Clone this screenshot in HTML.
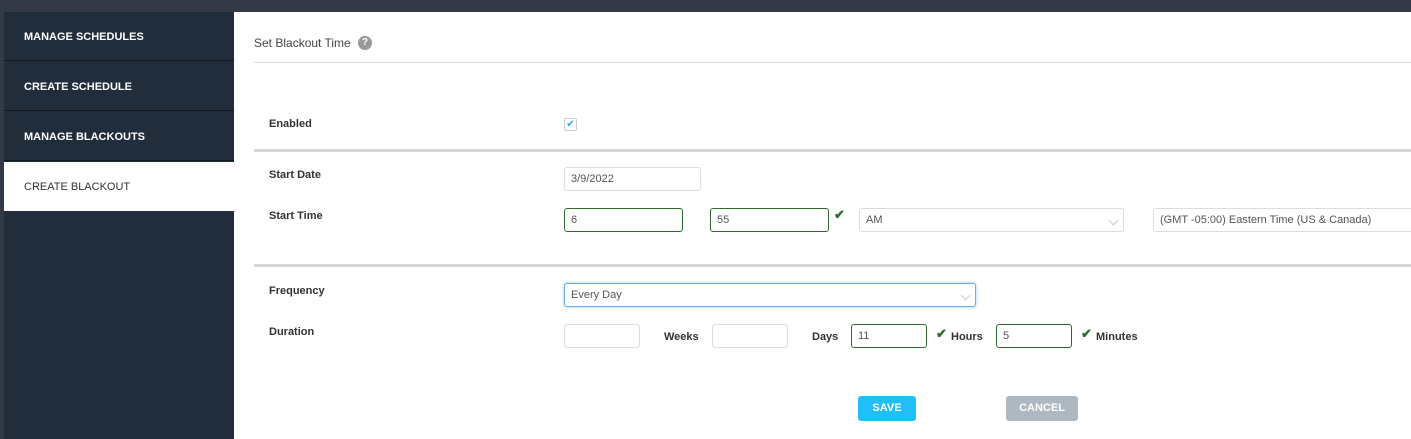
<!DOCTYPE html><html><head><style>
*{box-sizing:border-box;margin:0;padding:0}
body{width:1411px;height:439px;background:#fff;font-family:"Liberation Sans",Arial,sans-serif;position:relative;overflow:hidden}
.a{position:absolute}
.top{left:0;top:0;width:1411px;height:12px;background:#333a45}
.strip{left:0;top:12px;width:4px;height:427px;background:#333a45}
.side{left:4px;top:12px;width:230px;height:427px;background:#222d3b}
.item{position:absolute;left:4px;width:230px;height:49px;color:#fff;font-weight:bold;font-size:11px;padding-left:20px;line-height:50px;border-bottom:1px solid #111820}
.lbl{position:absolute;font-size:11px;font-weight:bold;color:#333}
.in{position:absolute;height:24px;border:1px solid #ddd;border-radius:3px;font-size:11px;color:#555;padding-left:6px;line-height:22px;background:#fff}
.g{border-color:#2f6b2f}
.chk{position:absolute;color:#2f6b2f;font-size:13px;font-weight:bold}
.hr{position:absolute;left:254px;right:0;height:3px;background:#d6d6d6}
.car{position:absolute;right:6px;top:8px;width:7px;height:7px;border-right:1.5px solid #ccc;border-bottom:1.5px solid #ccc;transform:rotate(45deg)}
.btn{position:absolute;top:396px;height:25px;border-radius:3px;color:#fff;font-size:11px;font-weight:bold;text-align:center;line-height:25px}
</style></head><body>
<div class="a top"></div><div class="a strip"></div><div class="a side"></div>
<div class="item" style="top:12px">MANAGE SCHEDULES</div>
<div class="item" style="top:62px">CREATE SCHEDULE</div>
<div class="item" style="top:112px">MANAGE BLACKOUTS</div>
<div class="item" style="top:162px;background:#fff;color:#333;font-weight:normal;border:none;height:49px">CREATE BLACKOUT</div>
<div class="a" style="left:254px;top:36px;font-size:12px;color:#444">Set Blackout Time</div>
<div class="a" style="left:358px;top:36px;width:14px;height:14px;border-radius:50%;background:#999;color:#fff;font-size:10px;font-weight:bold;text-align:center;line-height:14px">?</div>
<div class="a" style="left:254px;top:62px;right:0;height:1px;background:#ddd"></div>
<div class="lbl" style="left:269px;top:118px">Enabled</div>
<div class="a" style="left:564px;top:118px;width:13px;height:13px;border:1px solid #ccc;border-radius:2px;color:#2aa8e8;font-size:10px;text-align:center;line-height:12px">✔</div>
<div class="hr" style="top:149px"></div>
<div class="lbl" style="left:269px;top:169px">Start Date</div>
<div class="in" style="left:564px;top:167px;width:137px">3/9/2022</div>
<div class="lbl" style="left:269px;top:210px">Start Time</div>
<div class="in g" style="left:564px;top:208px;width:119px">6</div>
<div class="in g" style="left:710px;top:208px;width:119px">55</div>
<div class="chk" style="left:834px;top:207px">✔</div>
<div class="in" style="left:859px;top:208px;width:265px">AM<span class="car"></span></div>
<div class="in" style="left:1153px;top:208px;width:270px">(GMT -05:00) Eastern Time (US &amp; Canada)</div>
<div class="hr" style="top:264px"></div>
<div class="lbl" style="left:269px;top:285px">Frequency</div>
<div class="in" style="left:564px;top:283px;width:412px;border-color:#6aaee8;box-shadow:0 0 3px #9cc8f0">Every Day<span class="car"></span></div>
<div class="lbl" style="left:269px;top:326px">Duration</div>
<div class="in" style="left:564px;top:324px;width:76px"></div>
<div class="lbl" style="left:664px;top:331px">Weeks</div>
<div class="in" style="left:712px;top:324px;width:76px"></div>
<div class="lbl" style="left:812px;top:331px">Days</div>
<div class="in g" style="left:851px;top:324px;width:76px">11</div>
<div class="chk" style="left:936px;top:326px">✔</div>
<div class="lbl" style="left:951px;top:331px">Hours</div>
<div class="in g" style="left:996px;top:324px;width:76px">5</div>
<div class="chk" style="left:1081px;top:326px">✔</div>
<div class="lbl" style="left:1096px;top:331px">Minutes</div>
<div class="btn" style="left:858px;width:58px;background:#22bef9">SAVE</div>
<div class="btn" style="left:1006px;width:72px;background:#adb8c1">CANCEL</div>
</body></html>
